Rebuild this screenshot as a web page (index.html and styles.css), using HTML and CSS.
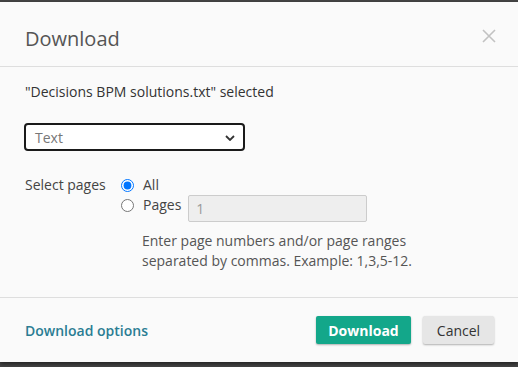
FILE: index.html
```html
<!DOCTYPE html>
<html>
<head>
<meta charset="utf-8">
<link rel="stylesheet" href="styles.css">
</head>
<body>
<div class="dialog">
  <div class="dlg-header">
    <h1 class="dlg-title">Download</h1>
    <button class="close-btn" aria-label="Close">
      <svg width="14" height="14" viewBox="0 0 14 14"><path d="M1 1L13 13M13 1L1 13" stroke="#c2c2c2" stroke-width="1.6" fill="none"/></svg>
    </button>
  </div>
  <div class="dlg-body">
    <p class="file-line">"Decisions BPM solutions.txt" selected</p>
    <div class="select">
      <span class="select-text">Text</span>
      <svg class="chev" width="10" height="6" viewBox="0 0 10 6"><path d="M1 1L5 5L9 1" stroke="#333" stroke-width="1.8" fill="none"/></svg>
    </div>
    <div class="pages-row">
      <div class="pages-label">Select pages</div>
      <div class="pages-opts">
        <label class="opt"><input type="radio" name="p" class="radio" checked><span>All</span></label>
        <label class="opt"><input type="radio" name="p" class="radio"><span>Pages</span><input type="text" class="range" value="1" disabled></label>
        <p class="help">Enter page numbers and/or page ranges<br>separated by commas. Example: 1,3,5-12.</p>
      </div>
    </div>
  </div>
  <div class="dlg-footer">
    <a class="opt-link" href="#">Download options</a>
    <div class="btns">
      <button class="btn btn-primary">Download</button>
      <button class="btn btn-cancel">Cancel</button>
    </div>
  </div>
</div>
</body>
</html>
```

FILE: styles.css
```css
html, body {
  margin: 0;
  padding: 0;
}
body {
  background: #454545;
  font-family: "Open Sans", "Liberation Sans", sans-serif;
  font-size: 14px;
  color: #333;
  padding-top: 2px;
  height: 367px;
  box-sizing: border-box;
  overflow: hidden;
}
.dialog {
  background: #fafafa;
  height: 360px;
  display: flex;
  flex-direction: column;
  box-shadow: 0 2px 4px rgba(0,0,0,0.5);
}
.dlg-header {
  display: flex;
  justify-content: space-between;
  align-items: flex-start;
  padding: 23px 22px 14px 25px;
  border-bottom: 1px solid #dedede;
}
.dlg-title {
  margin: 0;
  font-size: 20px;
  font-weight: 500;
  line-height: 27px;
  color: #555;
}
.close-btn {
  border: 0;
  background: none;
  padding: 0;
  margin-top: 4px;
  width: 14px;
  height: 14px;
  display: flex;
}
.dlg-body {
  flex: 1;
  padding: 15px 25px 0 24px;
}
.file-line {
  margin: 0 0 0 1px;
  line-height: 20px;
  color: #333;
}
.select {
  margin-top: 21px;
  width: 221px;
  height: 28px;
  box-sizing: border-box;
  border: 2px solid #1a1a1a;
  border-radius: 4px;
  background: #fff;
  display: flex;
  align-items: center;
  justify-content: space-between;
  padding: 1px 8px 0 9px;
}
.select-text {
  color: #777;
  line-height: 20px;
}
.chev {
  display: block;
}
.pages-row {
  display: flex;
  margin-top: 24px;
  padding-left: 1px;
}
.pages-label {
  width: 96px;
  line-height: 20px;
  color: #444;
}
.pages-opts {
  display: flex;
  flex-direction: column;
}
.opt {
  display: flex;
  align-items: flex-start;
  line-height: 20px;
  color: #444;
}
.radio {
  margin: 4px 9px 0 0;
  width: 13px;
  height: 13px;
}
.range {
  margin-left: 7px;
  width: 179px;
  height: 27px;
  box-sizing: border-box;
  border: 1px solid #ccc;
  border-radius: 2px;
  background: #eee;
  font-family: inherit;
  font-size: 14px;
  color: #999;
  padding: 0 7px;
}
.help {
  margin: 9px 0 0 21px;
  line-height: 20px;
  color: #555;
}
.dlg-footer {
  height: 64px;
  border-top: 1px solid #dedede;
  display: flex;
  align-items: center;
  justify-content: space-between;
  padding: 0 24px 0 25px;
}
.opt-link {
  color: #2a7d93;
  font-weight: 600;
  text-decoration: none;
}
.btns {
  display: flex;
  gap: 12px;
}
.btn {
  height: 28px;
  border: 0;
  border-radius: 2px;
  font-family: inherit;
  font-size: 14px;
  box-shadow: 0 1px 2px rgba(0,0,0,0.3);
}
.btn-primary {
  background: #13a78a;
  color: #fff;
  font-weight: 700;
  width: 95px;
}
.btn-cancel {
  background: #e6e6e6;
  color: #333;
  width: 71px;
}
```
